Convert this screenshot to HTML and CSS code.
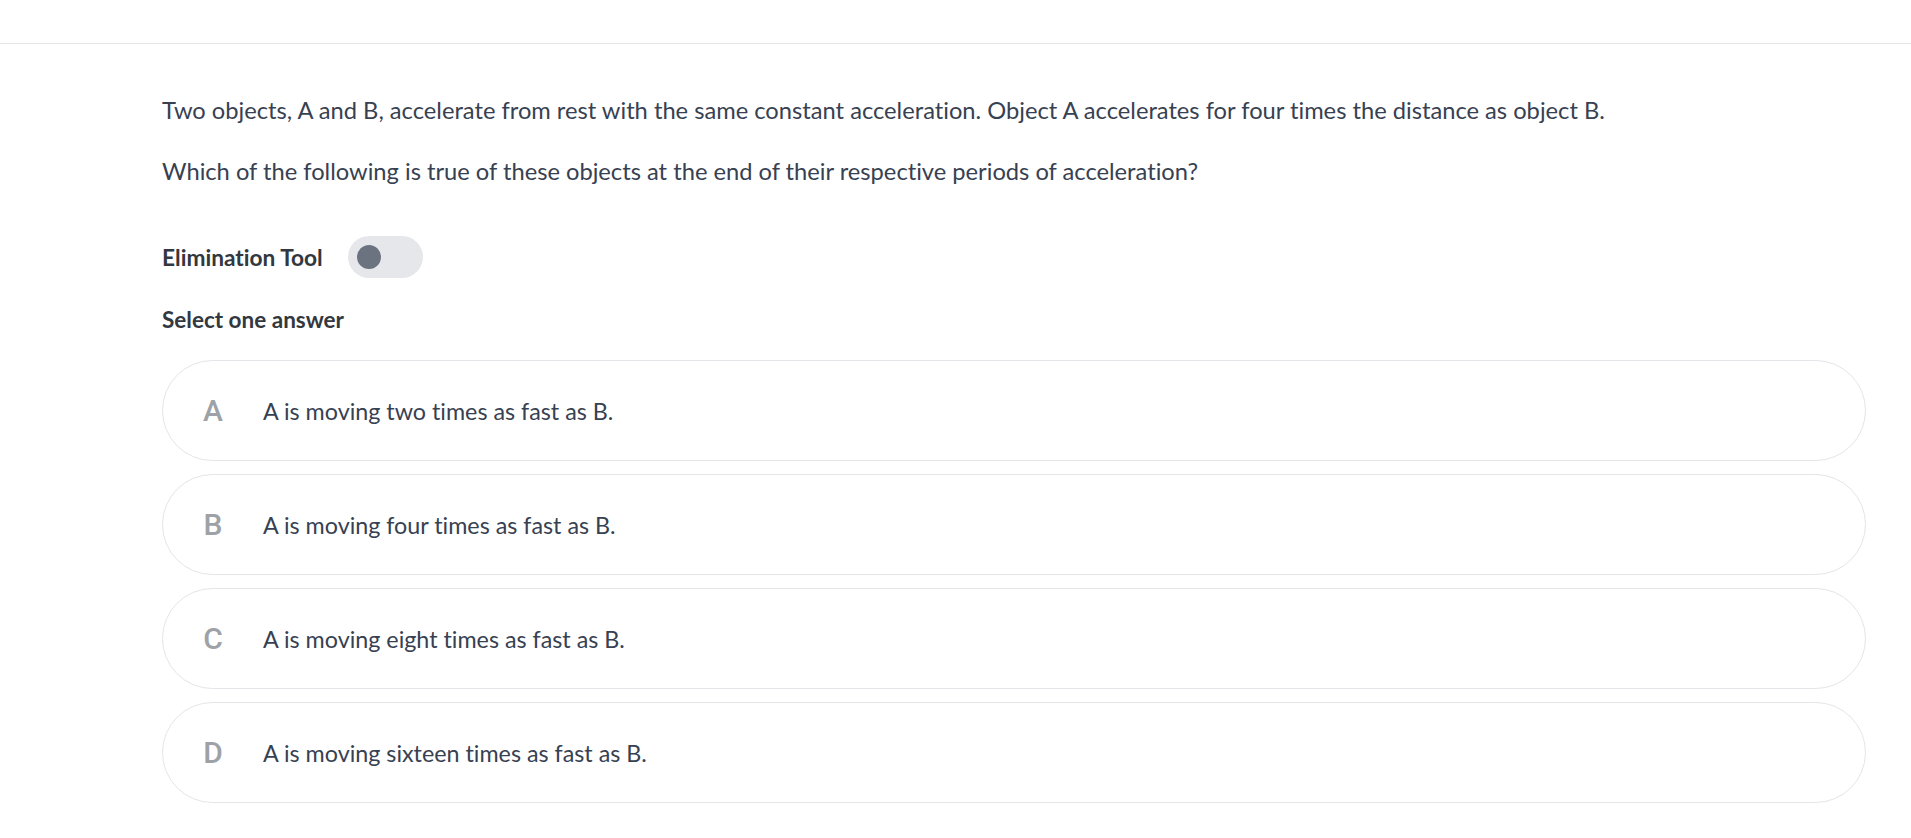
FILE: index.html
```html
<!DOCTYPE html>
<html lang="en">
<head>
<meta charset="utf-8">
<title>Question</title>
<link rel="stylesheet" href="styles.css">
</head>
<body>
<header class="topbar"></header>
<main class="content">
  <p class="stem">Two objects, A and B, accelerate from rest with the same constant acceleration. Object A accelerates for four times the distance as object B.</p>
  <p class="stem stem-q">Which of the following is true of these objects at the end of their respective periods of acceleration?</p>
  <div class="tool-row">
    <span class="tool-label">Elimination Tool</span>
    <span class="toggle"><span class="knob"></span></span>
  </div>
  <div class="select-label">Select one answer</div>
  <div class="options">
    <div class="option"><span class="letter">A</span><span class="opt-text">A is moving two times as fast as B.</span></div>
    <div class="option"><span class="letter">B</span><span class="opt-text">A is moving four times as fast as B.</span></div>
    <div class="option"><span class="letter">C</span><span class="opt-text">A is moving eight times as fast as B.</span></div>
    <div class="option"><span class="letter">D</span><span class="opt-text">A is moving sixteen times as fast as B.</span></div>
  </div>
</main>
</body>
</html>
```
FILE: styles.css
```css
* { box-sizing: border-box; }
html, body { margin: 0; padding: 0; background: #ffffff; }
body {
  font-family: Lato, "Open Sans", sans-serif;
  color: #374151;
  font-variant-ligatures: none;
  font-feature-settings: "liga" 0, "clig" 0;
}
.topbar {
  height: 44px;
  border-bottom: 1px solid #e5e7eb;
}
.content {
  padding: 0 45px 0 162px;
}
.stem {
  margin: 0;
  font-size: 23.7px;
  line-height: 30px;
}
.stem:first-child { padding-top: 51px; }
.stem-q { margin-top: 31px; }
.tool-row {
  display: flex;
  align-items: center;
  margin-top: 50px;
  height: 42px;
}
.tool-label {
  font-size: 22.7px;
  font-weight: 700;
  color: #333840;
}
.toggle {
  margin-left: 25px;
  width: 75px;
  height: 42px;
  border-radius: 21px;
  background: #e5e7eb;
  display: flex;
  align-items: center;
  padding-left: 9px;
}
.knob {
  width: 24px;
  height: 24px;
  border-radius: 50%;
  background: #6b7280;
}
.select-label {
  margin-top: 28px;
  font-size: 22.5px;
  font-weight: 700;
  color: #333840;
  line-height: 28px;
}
.options {
  margin-top: 26px;
  display: flex;
  flex-direction: column;
  gap: 13px;
}
.option {
  height: 101px;
  border: 1px solid #e3e5e8;
  border-radius: 51px;
  display: flex;
  align-items: center;
}
.letter {
  width: 100px;
  text-align: center;
  font-family: Roboto, "Liberation Sans", sans-serif;
  font-size: 30px;
  font-weight: 500;
  color: #9ea2a7;
}
.opt-text {
  font-size: 23.3px;
}
```
